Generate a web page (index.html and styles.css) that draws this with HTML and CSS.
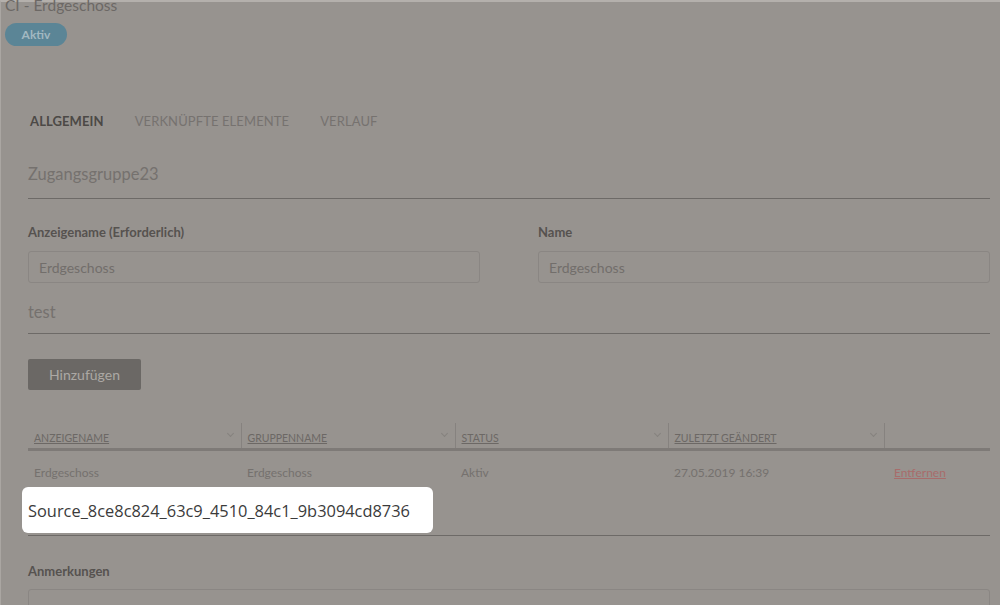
FILE: index.html
```html
<!DOCTYPE html>
<html lang="de">
<head>
<meta charset="utf-8">
<title>CI - Erdgeschoss</title>
<link rel="stylesheet" href="styles.css">
</head>
<body>
<div class="page">
  <header class="head">
    <h1 class="title">CI - Erdgeschoss</h1>
    <span class="pill">Aktiv</span>
  </header>
  <main class="content">
    <nav class="tabs">
      <span class="tab active">ALLGEMEIN</span>
      <span class="tab">VERKNÜPFTE ELEMENTE</span>
      <span class="tab">VERLAUF</span>
    </nav>
    <div class="line-field big">Zugangsgruppe23</div>
    <div class="grid2">
      <div class="field">
        <label class="label">Anzeigename (Erforderlich)</label>
        <div class="input">Erdgeschoss</div>
      </div>
      <div class="field">
        <label class="label">Name</label>
        <div class="input">Erdgeschoss</div>
      </div>
    </div>
    <div class="line-field big test">test</div>
    <button class="btn">Hinzufügen</button>
    <table class="tbl">
      <colgroup>
        <col class="c1"><col class="c2"><col class="c3"><col class="c4"><col>
      </colgroup>
      <thead>
        <tr>
          <th><span class="th">ANZEIGENAME</span><span class="chev"></span></th>
          <th><span class="th">GRUPPENNAME</span><span class="chev"></span></th>
          <th><span class="th">STATUS</span><span class="chev"></span></th>
          <th><span class="th">ZULETZT GEÄNDERT</span><span class="chev"></span></th>
          <th class="last"></th>
        </tr>
      </thead>
      <tbody>
        <tr>
          <td>Erdgeschoss</td>
          <td>Erdgeschoss</td>
          <td>Aktiv</td>
          <td>27.05.2019 16:39</td>
          <td class="action"><a class="remove">Entfernen</a></td>
        </tr>
      </tbody>
    </table>
    <div class="line-field source"></div>
    <label class="label notes">Anmerkungen</label>
    <div class="textarea"></div>
  </main>
  <div class="tooltip">Source_8ce8c824_63c9_4510_84c1_9b3094cd8736</div>
</div>
</body>
</html>
```
FILE: styles.css
```css
html, body {
  margin: 0;
  padding: 0;
  height: 100%;
  overflow: hidden;
}
body {
  background: #97938f;
  font-family: Lato, "Open Sans", sans-serif;
  color: #74706d;
}
.page {
  position: relative;
  height: 605px;
  border-top: 2px solid #b4b0ac;
  border-left: 1px solid #aaa6a2;
  box-sizing: border-box;
}
.head {
  height: 52px;
  padding-left: 4px;
}
.title {
  margin: -5px 0 0 0;
  font-size: 15.5px;
  line-height: 16px;
  font-weight: 400;
  color: #6c6865;
  height: 16px;
}
.pill {
  display: inline-flex;
  align-items: center;
  justify-content: center;
  margin-top: 10px;
  width: 62px;
  height: 23px;
  border-radius: 12px;
  background: #5b8596;
  color: #a2b8c1;
  font-size: 12px;
  font-weight: 700;
}
.content {
  padding: 0 10px 0 27px;
}
.tabs {
  display: flex;
  gap: 31px;
  padding: 63px 0 0 2px;
  height: 18px;
  align-items: center;
}
.tab {
  font-size: 13px;
  color: #76726f;
  letter-spacing: 0.1px;
}
.tab.active {
  font-weight: 700;
  color: #4c4946;
}
.line-field {
  border-bottom: 1px solid #6d6a67;
  box-sizing: border-box;
}
.big {
  font-size: 16.5px;
  color: #75716e;
  line-height: 20px;
}
.line-field.big {
  margin-top: 27px;
  height: 42px;
  padding-top: 7px;
}
.grid2 {
  display: grid;
  grid-template-columns: 452px 452px;
  column-gap: 58px;
  margin-top: 25px;
}
.field {
  display: flex;
  flex-direction: column;
}
.label {
  display: block;
  font-size: 13px;
  font-weight: 700;
  color: #56524f;
  line-height: 16px;
}
.input {
  margin-top: 11px;
  height: 32px;
  box-sizing: border-box;
  border: 1px solid #8a8683;
  border-radius: 3px;
  padding: 0 10px;
  display: flex;
  align-items: center;
  font-size: 14px;
  color: #726e6b;
}
.line-field.test {
  margin-top: 12px;
  height: 39px;
  padding-top: 7px;
}
.btn {
  display: block;
  margin-top: 25px;
  width: 113px;
  height: 31px;
  border: 0;
  border-radius: 2px;
  background: #6b6865;
  color: #aca8a4;
  font-family: inherit;
  font-size: 14px;
  padding: 0;
}
.tbl {
  margin-top: 33px;
  width: 962px;
  border-collapse: collapse;
  table-layout: fixed;
}
.c1 { width: 213px; }
.c2 { width: 214px; }
.c3 { width: 213px; }
.c4 { width: 216px; }
.tbl th {
  position: relative;
  height: 25px;
  padding: 0 6px;
  text-align: left;
  border-right: 1px solid #86827f;
  border-bottom: 3px solid #7e7a77;
  vertical-align: middle;
}
.tbl th.last {
  border-right: 0;
}
.th {
  font-size: 10.5px;
  font-weight: 400;
  color: #6c6865;
  text-decoration: underline;
}
.chev {
  position: absolute;
  right: 8px;
  top: 8px;
  width: 4px;
  height: 4px;
  border-right: 1px solid #86827f;
  border-bottom: 1px solid #86827f;
  transform: rotate(45deg);
}
.tbl td {
  height: 42px;
  padding: 0 6px;
  font-size: 12px;
  color: #75716e;
  vertical-align: middle;
}
.tbl td.action {
  padding-left: 10px;
}
.remove {
  color: #a86c6b;
  text-decoration: underline;
}
.line-field.source {
  margin-top: 22px;
  height: 21px;
}
.notes {
  margin-top: 27px;
}
.textarea {
  margin-top: 10px;
  height: 40px;
  border: 1px solid #8a8683;
  border-radius: 3px;
}
.tooltip {
  position: absolute;
  left: 21px;
  top: 485px;
  width: 411px;
  height: 46px;
  box-sizing: border-box;
  background: #ffffff;
  border-radius: 6px;
  padding: 0 0 0 6px;
  display: flex;
  align-items: center;
  font-family: "Open Sans", sans-serif;
  font-size: 16.4px;
  color: #3b3b3b;
}
```
